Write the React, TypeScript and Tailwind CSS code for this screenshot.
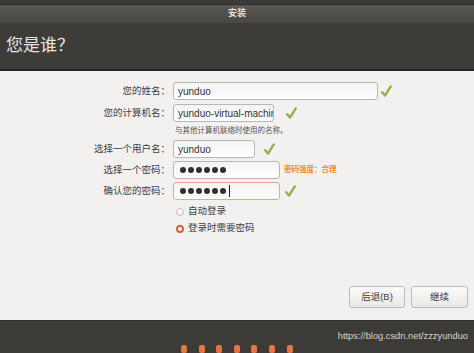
import React from 'react';

const FONT = '"Liberation Sans", "Noto Sans CJK SC", sans-serif';

const Check = ({ className = '' }: { className?: string }) => (
  <svg width="11" height="12" viewBox="0 0 11 12" className={className}>
    <path d="M1.2 7.2 L4 10.6 L9.8 1.4" fill="none" stroke="#93b04c" strokeWidth="2.4" strokeLinecap="round" strokeLinejoin="round" />
  </svg>
);

const Dots = ({ cursor = false }: { cursor?: boolean }) => (
  <div className="flex items-center gap-[1.7px] pl-[6px]">
    {[0, 1, 2, 3, 4, 5].map((i) => (
      <span key={i} className="w-[6.3px] h-[6.3px] rounded-full bg-[#2f2f2f]" />
    ))}
    {cursor && <span className="ml-[1px] w-px h-[12px] bg-[#222]" />}
  </div>
);

const Field = ({
  label,
  width,
  children,
  orange = false,
}: {
  label: string;
  width: number;
  children: React.ReactNode;
  orange?: boolean;
}) => (
  <div
    className={`h-[18px] rounded-[3px] border bg-gradient-to-b from-[#f4f4f4] to-white flex items-center overflow-hidden whitespace-nowrap ${
      orange ? 'border-[#e6a98f]' : 'border-[#b9b7b2]'
    }`}
    style={{ width }}
    aria-label={label}
  >
    {children}
  </div>
);

const Row = ({ label, children }: { label: string; children: React.ReactNode }) => (
  <div className="flex items-center">
    <div className="w-[173px] pr-[3px] text-right text-[9.5px] text-[#3c3c3c]">{label}</div>
    {children}
  </div>
);

export default function App() {
  return (
    <div className="w-[474px] h-[353px] flex flex-col overflow-hidden" style={{ fontFamily: FONT }}>
      <div className="h-[5px] bg-[#3b3a36] border-b border-[#2c2b28]" />
      <div className="h-[18px] bg-gradient-to-b from-[#5b5853] to-[#4a4844] flex items-center justify-center text-[9px] font-bold text-[#e2ded6]">
        安装
      </div>
      <div className="h-[46px] bg-[#3e3c38] flex items-center px-[6px] text-[17px] text-[#e6e4e0]">
        您是谁？
      </div>
      <div className="h-[2px] bg-[#272624]" />

      <div className="flex-1 bg-[#f2f1f0] flex flex-col pt-[11px]">
        <div className="flex flex-col">
          <Row label="您的姓名：">
            <Field label="name" width={205}>
              <span className="pl-[4px] text-[10px] text-[#333]">yunduo</span>
            </Field>
            <Check className="ml-[3px]" />
          </Row>

          <div className="mt-[4px]">
            <Row label="您的计算机名：">
              <Field label="host" width={101}>
                <span className="pl-[4px] text-[10px] text-[#333]">yunduo-virtual-machine</span>
              </Field>
              <Check className="ml-[12px]" />
            </Row>
          </div>

          <div className="pl-[175px] mt-[2px] h-[14px] flex items-center text-[7.5px] text-[#555]">
            与其他计算机联络时使用的名称。
          </div>

          <div className="mt-[2px]">
            <Row label="选择一个用户名：">
              <Field label="user" width={82}>
                <span className="pl-[4px] text-[10px] text-[#333]">yunduo</span>
              </Field>
              <Check className="ml-[9px]" />
            </Row>
          </div>

          <div className="mt-[3px]">
            <Row label="选择一个密码：">
              <Field label="pw" width={107}>
                <Dots />
              </Field>
              <span className="ml-[4px] text-[7.5px] font-bold text-[#f08a24]">密码强度：合理</span>
            </Row>
          </div>

          <div className="mt-[3px]">
            <Row label="确认您的密码：">
              <Field label="pw2" width={107} orange>
                <Dots cursor />
              </Field>
              <Check className="ml-[5px]" />
            </Row>
          </div>

          <div className="pl-[176px] mt-[6px] flex flex-col gap-[6px] text-[9.5px] text-[#3c3c3c]">
            <div className="flex items-center h-[11px]">
              <span className="w-[8px] h-[8px] rounded-full border border-[#c4c2be] bg-gradient-to-b from-white to-[#eceae8]" />
              <span className="ml-[4px]">自动登录</span>
            </div>
            <div className="flex items-center h-[11px]">
              <span className="w-[8px] h-[8px] rounded-full border-[2px] border-[#dd5f30] bg-white" />
              <span className="ml-[4px]">登录时需要密码</span>
            </div>
          </div>
        </div>

        <div className="mt-auto mb-[12px] mr-[6px] flex justify-end gap-[6px]">
          <button className="w-[56px] h-[22px] rounded-[3px] border border-[#bdbbb7] bg-gradient-to-b from-[#fbfbfb] to-[#e9e8e6] text-[9.5px] text-[#3c3c3c]">
            后退(B)
          </button>
          <button className="w-[57px] h-[22px] rounded-[3px] border border-[#bdbbb7] bg-gradient-to-b from-[#fbfbfb] to-[#e9e8e6] text-[9.5px] text-[#3c3c3c]">
            继续
          </button>
        </div>
      </div>

      <div className="h-[33px] bg-[#3c3b37] border-t border-[#2e2d2a] flex flex-col">
        <div className="flex justify-end pr-[6px] pt-[9px] h-[25px] text-[9.3px] text-[#d8d6d2]">
          https://blog.csdn.net/zzzyunduo
        </div>
        <div className="flex pl-[181px] gap-[11.6px]">
          {[0, 1, 2, 3, 4, 5, 6].map((i) => (
            <span key={i} className="w-[6px] h-[8px] rounded-[2px] bg-[#ea7440]" />
          ))}
        </div>
      </div>
    </div>
  );
}
